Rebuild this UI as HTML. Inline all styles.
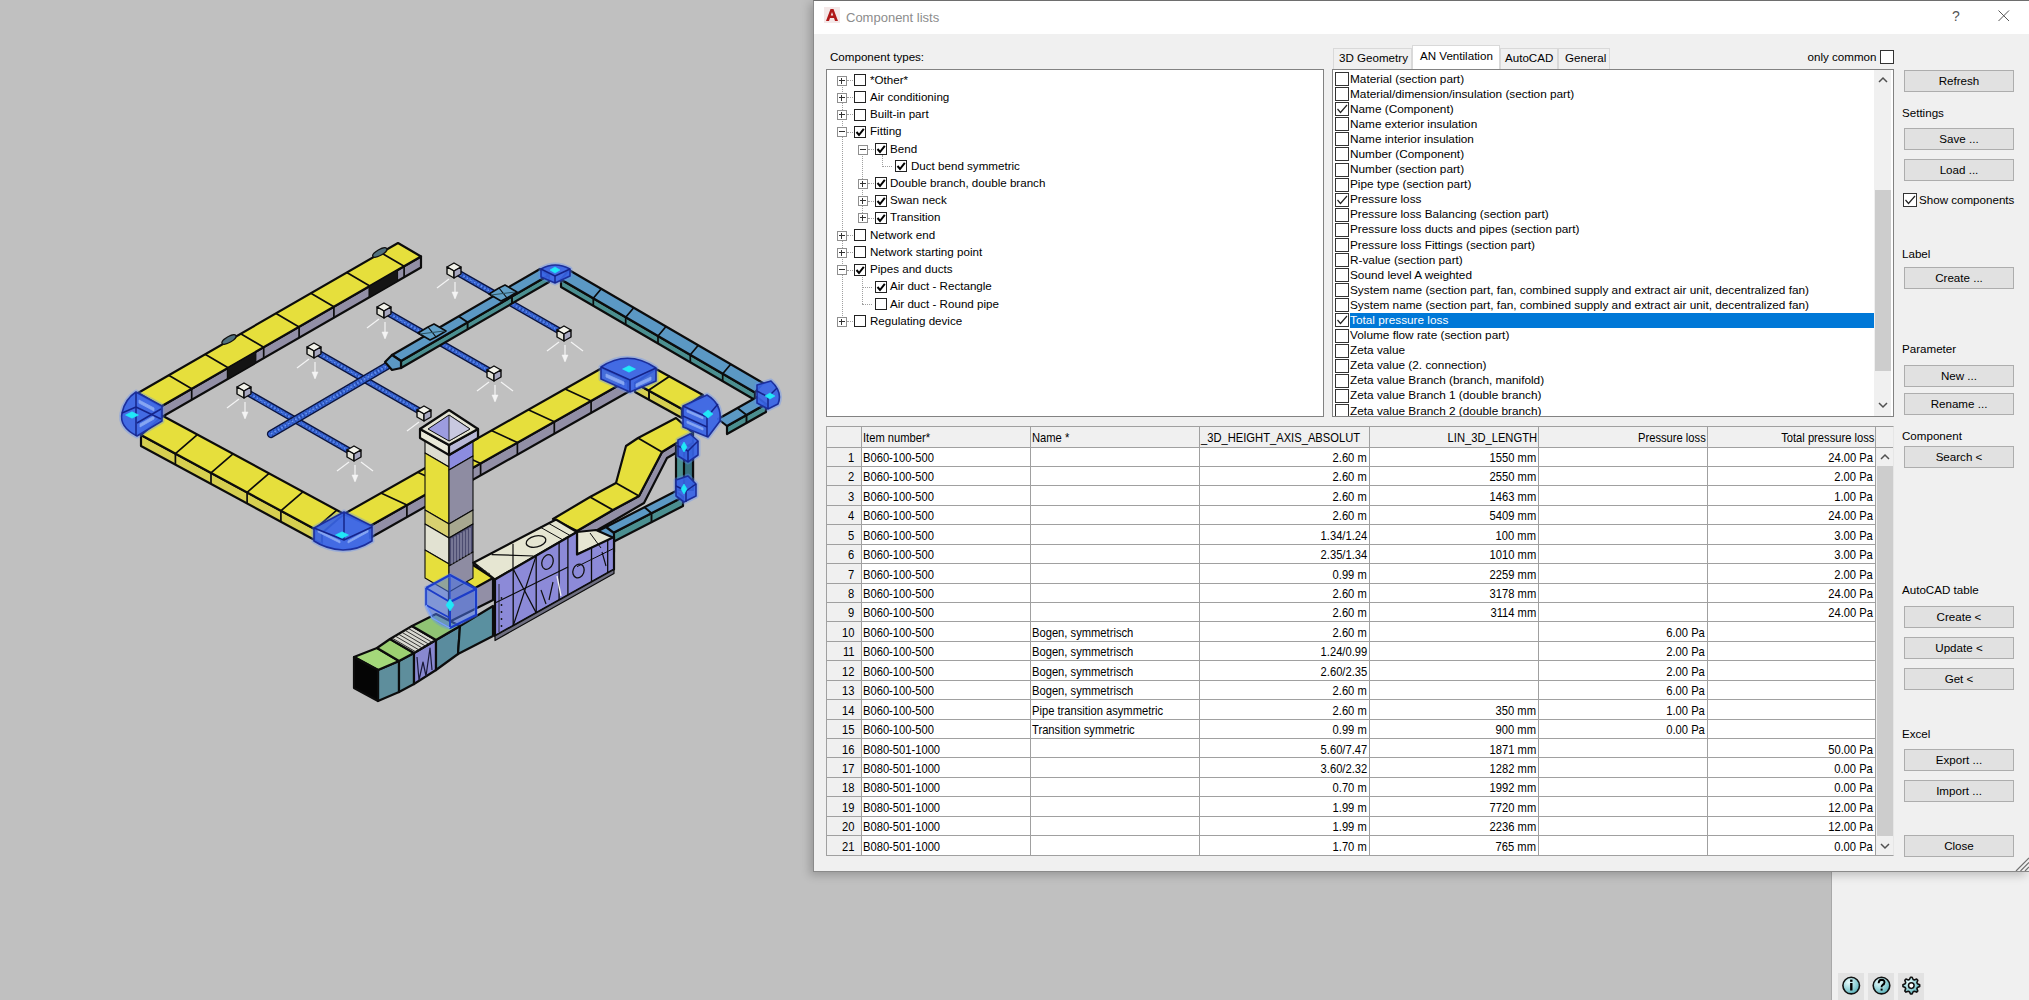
<!DOCTYPE html><html><head><meta charset="utf-8"><style>
*{margin:0;padding:0;box-sizing:border-box}
html,body{width:2029px;height:1000px;overflow:hidden;background:#c0c0c0;font-family:"Liberation Sans",sans-serif;font-size:11.6px;color:#000}
.a{position:absolute;white-space:nowrap}
.t{position:absolute;white-space:nowrap;line-height:14px}
.btn{position:absolute;left:1904px;width:110px;height:22px;background:#e1e1e1;border:1px solid #adadad;text-align:center;line-height:20px}
.cb{position:absolute;width:13px;height:13px;border:1px solid #333;background:#fff}
.exp{position:absolute;width:10px;height:10px;border:1px solid #8f8f8f;background:#fff}
.exp:before{content:"";position:absolute;left:1px;top:3px;width:6px;height:2px;border-top:1px solid #333}
.exp.p:after{content:"";position:absolute;left:3px;top:1px;width:1px;height:6px;background:#333}
.dv{position:absolute;border-left:1px dotted #a0a0a0}
.dh{position:absolute;border-top:1px dotted #a0a0a0}
.cell{position:absolute;white-space:nowrap;line-height:19px;height:19px;font-size:13px}
.cell span{display:inline-block;transform:scaleX(.86);transform-origin:0 50%}
.cell.r span{transform-origin:100% 50%}
</style></head><body>
<svg class="a" style="left:0;top:0" width="812" height="1000" viewBox="0 0 812 1000">
<polyline points="239.0,399.0 227.0,408.0" fill="none" stroke="#f4f4f4" stroke-width="1.2" stroke-linejoin="round" />
<polyline points="245.0,402.0 245.0,418.0" fill="none" stroke="#f4f4f4" stroke-width="1.2" stroke-linejoin="round" />
<polygon points="242.0,412.0 248.0,412.0 245.0,419.0" fill="#f4f4f4" stroke="#f4f4f4" stroke-width="0.5" stroke-linejoin="round" />
<polyline points="349.0,462.0 337.0,471.0" fill="none" stroke="#f4f4f4" stroke-width="1.2" stroke-linejoin="round" />
<polyline points="361.0,462.0 373.0,471.0" fill="none" stroke="#f4f4f4" stroke-width="1.2" stroke-linejoin="round" />
<polyline points="355.0,465.0 355.0,481.0" fill="none" stroke="#f4f4f4" stroke-width="1.2" stroke-linejoin="round" />
<polygon points="352.0,475.0 358.0,475.0 355.0,482.0" fill="#f4f4f4" stroke="#f4f4f4" stroke-width="0.5" stroke-linejoin="round" />
<polyline points="309.0,359.0 297.0,368.0" fill="none" stroke="#f4f4f4" stroke-width="1.2" stroke-linejoin="round" />
<polyline points="315.0,362.0 315.0,378.0" fill="none" stroke="#f4f4f4" stroke-width="1.2" stroke-linejoin="round" />
<polygon points="312.0,372.0 318.0,372.0 315.0,379.0" fill="#f4f4f4" stroke="#f4f4f4" stroke-width="0.5" stroke-linejoin="round" />
<polyline points="419.0,422.0 407.0,431.0" fill="none" stroke="#f4f4f4" stroke-width="1.2" stroke-linejoin="round" />
<polyline points="431.0,422.0 443.0,431.0" fill="none" stroke="#f4f4f4" stroke-width="1.2" stroke-linejoin="round" />
<polyline points="425.0,425.0 425.0,441.0" fill="none" stroke="#f4f4f4" stroke-width="1.2" stroke-linejoin="round" />
<polygon points="422.0,435.0 428.0,435.0 425.0,442.0" fill="#f4f4f4" stroke="#f4f4f4" stroke-width="0.5" stroke-linejoin="round" />
<polyline points="379.0,319.0 367.0,328.0" fill="none" stroke="#f4f4f4" stroke-width="1.2" stroke-linejoin="round" />
<polyline points="385.0,322.0 385.0,338.0" fill="none" stroke="#f4f4f4" stroke-width="1.2" stroke-linejoin="round" />
<polygon points="382.0,332.0 388.0,332.0 385.0,339.0" fill="#f4f4f4" stroke="#f4f4f4" stroke-width="0.5" stroke-linejoin="round" />
<polyline points="489.0,382.0 477.0,391.0" fill="none" stroke="#f4f4f4" stroke-width="1.2" stroke-linejoin="round" />
<polyline points="501.0,382.0 513.0,391.0" fill="none" stroke="#f4f4f4" stroke-width="1.2" stroke-linejoin="round" />
<polyline points="495.0,385.0 495.0,401.0" fill="none" stroke="#f4f4f4" stroke-width="1.2" stroke-linejoin="round" />
<polygon points="492.0,395.0 498.0,395.0 495.0,402.0" fill="#f4f4f4" stroke="#f4f4f4" stroke-width="0.5" stroke-linejoin="round" />
<polyline points="449.0,279.0 437.0,288.0" fill="none" stroke="#f4f4f4" stroke-width="1.2" stroke-linejoin="round" />
<polyline points="455.0,282.0 455.0,298.0" fill="none" stroke="#f4f4f4" stroke-width="1.2" stroke-linejoin="round" />
<polygon points="452.0,292.0 458.0,292.0 455.0,299.0" fill="#f4f4f4" stroke="#f4f4f4" stroke-width="0.5" stroke-linejoin="round" />
<polyline points="559.0,342.0 547.0,351.0" fill="none" stroke="#f4f4f4" stroke-width="1.2" stroke-linejoin="round" />
<polyline points="571.0,342.0 583.0,351.0" fill="none" stroke="#f4f4f4" stroke-width="1.2" stroke-linejoin="round" />
<polyline points="565.0,345.0 565.0,361.0" fill="none" stroke="#f4f4f4" stroke-width="1.2" stroke-linejoin="round" />
<polygon points="562.0,355.0 568.0,355.0 565.0,362.0" fill="#f4f4f4" stroke="#f4f4f4" stroke-width="0.5" stroke-linejoin="round" />
<polygon points="161.0,406.5 421.0,256.5 421.0,267.5 161.0,417.5" fill="#928fa6" stroke="#0c0c0c" stroke-width="2.2" stroke-linejoin="round" />
<polygon points="138.0,393.0 398.0,243.0 421.0,256.5 161.0,406.5" fill="#e6df3c" stroke="#0c0c0c" stroke-width="2.2" stroke-linejoin="round" />
<polyline points="168.7,375.3 191.7,388.8 191.7,399.8" fill="none" stroke="#0c0c0c" stroke-width="1.7" stroke-linejoin="round" />
<polyline points="205.1,354.3 228.1,367.8 228.1,378.8" fill="none" stroke="#0c0c0c" stroke-width="1.7" stroke-linejoin="round" />
<polyline points="240.7,333.8 263.7,347.2 263.7,358.2" fill="none" stroke="#0c0c0c" stroke-width="1.7" stroke-linejoin="round" />
<polyline points="276.1,313.4 299.1,326.9 299.1,337.9" fill="none" stroke="#0c0c0c" stroke-width="1.7" stroke-linejoin="round" />
<polyline points="310.9,293.2 333.9,306.8 333.9,317.8" fill="none" stroke="#0c0c0c" stroke-width="1.7" stroke-linejoin="round" />
<polyline points="346.8,272.6 369.8,286.1 369.8,297.1" fill="none" stroke="#0c0c0c" stroke-width="1.7" stroke-linejoin="round" />
<polyline points="381.1,252.8 404.1,266.2 404.1,277.2" fill="none" stroke="#0c0c0c" stroke-width="1.7" stroke-linejoin="round" />
<polygon points="227.3,368.2 255.9,351.8 255.9,362.8 227.3,379.2" fill="#141414" stroke="#0c0c0c" stroke-width="1" stroke-linejoin="round" />
<polygon points="369.0,286.5 397.6,270.0 397.6,281.0 369.0,297.5" fill="#141414" stroke="#0c0c0c" stroke-width="1" stroke-linejoin="round" />
<ellipse cx="229.0" cy="339.5" rx="8" ry="3" transform="rotate(-30 229.0 339.5)" fill="#50707e" stroke="#111" stroke-width="1.2"/>
<ellipse cx="379.8" cy="252.5" rx="8" ry="3" transform="rotate(-30 379.8 252.5)" fill="#50707e" stroke="#111" stroke-width="1.2"/>
<polygon points="141.0,435.0 322.0,533.0 322.0,544.0 141.0,446.0" fill="#d6cf50" stroke="#0c0c0c" stroke-width="2.2" stroke-linejoin="round" />
<polygon points="163.0,416.0 344.0,514.0 322.0,533.0 141.0,435.0" fill="#e6df3c" stroke="#0c0c0c" stroke-width="2.2" stroke-linejoin="round" />
<polyline points="197.4,434.6 175.4,453.6 175.4,464.6" fill="none" stroke="#0c0c0c" stroke-width="1.7" stroke-linejoin="round" />
<polyline points="233.0,453.9 211.0,472.9 211.0,483.9" fill="none" stroke="#0c0c0c" stroke-width="1.7" stroke-linejoin="round" />
<polyline points="269.1,473.4 247.1,492.4 247.1,503.4" fill="none" stroke="#0c0c0c" stroke-width="1.7" stroke-linejoin="round" />
<polyline points="302.9,491.8 280.9,510.8 280.9,521.8" fill="none" stroke="#0c0c0c" stroke-width="1.7" stroke-linejoin="round" />
<polyline points="336.8,510.1 314.8,529.1 314.8,540.1" fill="none" stroke="#0c0c0c" stroke-width="1.7" stroke-linejoin="round" />
<polyline points="243.0,390.0 353.0,453.0" fill="none" stroke="#0a1440" stroke-width="7.0" stroke-linejoin="round" stroke-linecap="round"/>
<polyline points="243.0,390.0 353.0,453.0" fill="none" stroke="#3a68d8" stroke-width="4.2" stroke-linejoin="round" stroke-linecap="round"/>
<polyline points="243.0,390.0 353.0,453.0" fill="none" stroke="#264aa8" stroke-width="4.2" stroke-linejoin="round" stroke-dasharray="1.2 2.2"/>
<polyline points="243.0,390.0 353.0,453.0" fill="none" stroke="#6a96f0" stroke-width="1.26" stroke-linejoin="round" stroke-dasharray="1.5 2.5"/>
<polyline points="313.0,350.0 423.0,413.0" fill="none" stroke="#0a1440" stroke-width="7.0" stroke-linejoin="round" stroke-linecap="round"/>
<polyline points="313.0,350.0 423.0,413.0" fill="none" stroke="#3a68d8" stroke-width="4.2" stroke-linejoin="round" stroke-linecap="round"/>
<polyline points="313.0,350.0 423.0,413.0" fill="none" stroke="#264aa8" stroke-width="4.2" stroke-linejoin="round" stroke-dasharray="1.2 2.2"/>
<polyline points="313.0,350.0 423.0,413.0" fill="none" stroke="#6a96f0" stroke-width="1.26" stroke-linejoin="round" stroke-dasharray="1.5 2.5"/>
<polyline points="383.0,310.0 493.0,373.0" fill="none" stroke="#0a1440" stroke-width="7.0" stroke-linejoin="round" stroke-linecap="round"/>
<polyline points="383.0,310.0 493.0,373.0" fill="none" stroke="#3a68d8" stroke-width="4.2" stroke-linejoin="round" stroke-linecap="round"/>
<polyline points="383.0,310.0 493.0,373.0" fill="none" stroke="#264aa8" stroke-width="4.2" stroke-linejoin="round" stroke-dasharray="1.2 2.2"/>
<polyline points="383.0,310.0 493.0,373.0" fill="none" stroke="#6a96f0" stroke-width="1.26" stroke-linejoin="round" stroke-dasharray="1.5 2.5"/>
<polyline points="453.0,270.0 563.0,333.0" fill="none" stroke="#0a1440" stroke-width="7.0" stroke-linejoin="round" stroke-linecap="round"/>
<polyline points="453.0,270.0 563.0,333.0" fill="none" stroke="#3a68d8" stroke-width="4.2" stroke-linejoin="round" stroke-linecap="round"/>
<polyline points="453.0,270.0 563.0,333.0" fill="none" stroke="#264aa8" stroke-width="4.2" stroke-linejoin="round" stroke-dasharray="1.2 2.2"/>
<polyline points="453.0,270.0 563.0,333.0" fill="none" stroke="#6a96f0" stroke-width="1.26" stroke-linejoin="round" stroke-dasharray="1.5 2.5"/>
<polyline points="271.0,434.0 392.0,363.0" fill="none" stroke="#0a1440" stroke-width="8.3" stroke-linejoin="round" stroke-linecap="round"/>
<polyline points="271.0,434.0 392.0,363.0" fill="none" stroke="#3a68d8" stroke-width="5.5" stroke-linejoin="round" stroke-linecap="round"/>
<polyline points="271.0,434.0 392.0,363.0" fill="none" stroke="#264aa8" stroke-width="5.5" stroke-linejoin="round" stroke-dasharray="1.2 2.2"/>
<polyline points="271.0,434.0 392.0,363.0" fill="none" stroke="#6a96f0" stroke-width="1.65" stroke-linejoin="round" stroke-dasharray="1.5 2.5"/>
<polygon points="401.0,361.0 549.0,275.0 549.0,282.0 401.0,368.0" fill="#4b8f90" stroke="#0c0c0c" stroke-width="2.2" stroke-linejoin="round" />
<polygon points="540.0,269.0 392.0,355.0 401.0,361.0 549.0,275.0" fill="#5b98c4" stroke="#0c0c0c" stroke-width="2.2" stroke-linejoin="round" />
<polyline points="503.0,290.5 512.0,296.5 512.0,303.5" fill="none" stroke="#0c0c0c" stroke-width="1.9" stroke-linejoin="round" />
<polyline points="458.6,316.3 467.6,322.3 467.6,329.3" fill="none" stroke="#0c0c0c" stroke-width="1.9" stroke-linejoin="round" />
<polygon points="392.0,355.0 385.0,362.0 392.0,370.0 401.0,368.0 401.0,361.0" fill="#5b98c4" stroke="#0c0c0c" stroke-width="2.2" stroke-linejoin="round" />
<polygon points="418.0,333.0 428.0,327.0 434.0,324.0 446.0,331.0 436.0,337.0 430.0,340.0" fill="#62a0c8" stroke="#0c0c0c" stroke-width="1.6" stroke-linejoin="round" />
<polyline points="428.0,327.0 436.0,337.0" fill="none" stroke="#0c0c0c" stroke-width="1.2" stroke-linejoin="round" />
<polyline points="420.0,334.0 444.0,331.0" fill="none" stroke="#2a5060" stroke-width="1.0" stroke-linejoin="round" />
<polygon points="489.0,294.0 499.0,288.0 505.0,285.0 517.0,292.0 507.0,298.0 501.0,301.0" fill="#62a0c8" stroke="#0c0c0c" stroke-width="1.6" stroke-linejoin="round" />
<polyline points="499.0,288.0 507.0,298.0" fill="none" stroke="#0c0c0c" stroke-width="1.2" stroke-linejoin="round" />
<polyline points="491.0,295.0 515.0,292.0" fill="none" stroke="#2a5060" stroke-width="1.0" stroke-linejoin="round" />
<polygon points="237.0,387.0 244.0,383.0 251.0,387.0 244.0,391.0" fill="#f2f2ea" stroke="#0c0c0c" stroke-width="1.4" stroke-linejoin="round" />
<polygon points="237.0,387.0 244.0,391.0 244.0,398.0 237.0,394.0" fill="#e2e2d8" stroke="#0c0c0c" stroke-width="1.4" stroke-linejoin="round" />
<polygon points="244.0,391.0 251.0,387.0 251.0,394.0 244.0,398.0" fill="#a8a8c0" stroke="#0c0c0c" stroke-width="1.4" stroke-linejoin="round" />
<polygon points="347.0,450.0 354.0,446.0 361.0,450.0 354.0,454.0" fill="#f2f2ea" stroke="#0c0c0c" stroke-width="1.4" stroke-linejoin="round" />
<polygon points="347.0,450.0 354.0,454.0 354.0,461.0 347.0,457.0" fill="#e2e2d8" stroke="#0c0c0c" stroke-width="1.4" stroke-linejoin="round" />
<polygon points="354.0,454.0 361.0,450.0 361.0,457.0 354.0,461.0" fill="#a8a8c0" stroke="#0c0c0c" stroke-width="1.4" stroke-linejoin="round" />
<polygon points="307.0,347.0 314.0,343.0 321.0,347.0 314.0,351.0" fill="#f2f2ea" stroke="#0c0c0c" stroke-width="1.4" stroke-linejoin="round" />
<polygon points="307.0,347.0 314.0,351.0 314.0,358.0 307.0,354.0" fill="#e2e2d8" stroke="#0c0c0c" stroke-width="1.4" stroke-linejoin="round" />
<polygon points="314.0,351.0 321.0,347.0 321.0,354.0 314.0,358.0" fill="#a8a8c0" stroke="#0c0c0c" stroke-width="1.4" stroke-linejoin="round" />
<polygon points="417.0,410.0 424.0,406.0 431.0,410.0 424.0,414.0" fill="#f2f2ea" stroke="#0c0c0c" stroke-width="1.4" stroke-linejoin="round" />
<polygon points="417.0,410.0 424.0,414.0 424.0,421.0 417.0,417.0" fill="#e2e2d8" stroke="#0c0c0c" stroke-width="1.4" stroke-linejoin="round" />
<polygon points="424.0,414.0 431.0,410.0 431.0,417.0 424.0,421.0" fill="#a8a8c0" stroke="#0c0c0c" stroke-width="1.4" stroke-linejoin="round" />
<polygon points="377.0,307.0 384.0,303.0 391.0,307.0 384.0,311.0" fill="#f2f2ea" stroke="#0c0c0c" stroke-width="1.4" stroke-linejoin="round" />
<polygon points="377.0,307.0 384.0,311.0 384.0,318.0 377.0,314.0" fill="#e2e2d8" stroke="#0c0c0c" stroke-width="1.4" stroke-linejoin="round" />
<polygon points="384.0,311.0 391.0,307.0 391.0,314.0 384.0,318.0" fill="#a8a8c0" stroke="#0c0c0c" stroke-width="1.4" stroke-linejoin="round" />
<polygon points="487.0,370.0 494.0,366.0 501.0,370.0 494.0,374.0" fill="#f2f2ea" stroke="#0c0c0c" stroke-width="1.4" stroke-linejoin="round" />
<polygon points="487.0,370.0 494.0,374.0 494.0,381.0 487.0,377.0" fill="#e2e2d8" stroke="#0c0c0c" stroke-width="1.4" stroke-linejoin="round" />
<polygon points="494.0,374.0 501.0,370.0 501.0,377.0 494.0,381.0" fill="#a8a8c0" stroke="#0c0c0c" stroke-width="1.4" stroke-linejoin="round" />
<polygon points="447.0,267.0 454.0,263.0 461.0,267.0 454.0,271.0" fill="#f2f2ea" stroke="#0c0c0c" stroke-width="1.4" stroke-linejoin="round" />
<polygon points="447.0,267.0 454.0,271.0 454.0,278.0 447.0,274.0" fill="#e2e2d8" stroke="#0c0c0c" stroke-width="1.4" stroke-linejoin="round" />
<polygon points="454.0,271.0 461.0,267.0 461.0,274.0 454.0,278.0" fill="#a8a8c0" stroke="#0c0c0c" stroke-width="1.4" stroke-linejoin="round" />
<polygon points="557.0,330.0 564.0,326.0 571.0,330.0 564.0,334.0" fill="#f2f2ea" stroke="#0c0c0c" stroke-width="1.4" stroke-linejoin="round" />
<polygon points="557.0,330.0 564.0,334.0 564.0,341.0 557.0,337.0" fill="#e2e2d8" stroke="#0c0c0c" stroke-width="1.4" stroke-linejoin="round" />
<polygon points="564.0,334.0 571.0,330.0 571.0,337.0 564.0,341.0" fill="#a8a8c0" stroke="#0c0c0c" stroke-width="1.4" stroke-linejoin="round" />
<polygon points="561.0,279.5 755.0,392.5 755.0,400.0 561.0,287.0" fill="#4b8f90" stroke="#0c0c0c" stroke-width="2.2" stroke-linejoin="round" />
<polygon points="569.0,270.0 763.0,383.0 755.0,392.5 561.0,279.5" fill="#5b98c4" stroke="#0c0c0c" stroke-width="2.2" stroke-linejoin="round" />
<polyline points="601.3,288.8 593.3,298.3 593.3,305.8" fill="none" stroke="#0c0c0c" stroke-width="1.7" stroke-linejoin="round" />
<polyline points="633.7,307.7 625.7,317.2 625.7,324.7" fill="none" stroke="#0c0c0c" stroke-width="1.7" stroke-linejoin="round" />
<polyline points="666.0,326.5 658.0,336.0 658.0,343.5" fill="none" stroke="#0c0c0c" stroke-width="1.7" stroke-linejoin="round" />
<polyline points="698.3,345.3 690.3,354.8 690.3,362.3" fill="none" stroke="#0c0c0c" stroke-width="1.7" stroke-linejoin="round" />
<polyline points="730.7,364.2 722.7,373.7 722.7,381.2" fill="none" stroke="#0c0c0c" stroke-width="1.7" stroke-linejoin="round" />
<polygon points="727.0,426.0 766.0,404.0 766.0,412.0 727.0,434.0" fill="#4b8f90" stroke="#0c0c0c" stroke-width="2.2" stroke-linejoin="round" />
<polygon points="757.0,397.0 718.0,419.0 727.0,426.0 766.0,404.0" fill="#5b98c4" stroke="#0c0c0c" stroke-width="2.2" stroke-linejoin="round" />
<polyline points="737.5,408.0 746.5,415.0 746.5,423.0" fill="none" stroke="#0c0c0c" stroke-width="1.9" stroke-linejoin="round" />
<polygon points="370.0,526.0 628.0,380.0 628.0,392.0 370.0,538.0" fill="#928fa6" stroke="#0c0c0c" stroke-width="2.2" stroke-linejoin="round" />
<polygon points="344.0,514.0 602.0,368.0 628.0,380.0 370.0,526.0" fill="#e6df3c" stroke="#0c0c0c" stroke-width="2.2" stroke-linejoin="round" />
<polyline points="380.9,493.1 406.9,505.1 406.9,517.1" fill="none" stroke="#0c0c0c" stroke-width="1.7" stroke-linejoin="round" />
<polyline points="417.7,472.3 443.7,484.3 443.7,496.3" fill="none" stroke="#0c0c0c" stroke-width="1.7" stroke-linejoin="round" />
<polyline points="454.6,451.4 480.6,463.4 480.6,475.4" fill="none" stroke="#0c0c0c" stroke-width="1.7" stroke-linejoin="round" />
<polyline points="491.4,430.6 517.4,442.6 517.4,454.6" fill="none" stroke="#0c0c0c" stroke-width="1.7" stroke-linejoin="round" />
<polyline points="528.3,409.7 554.3,421.7 554.3,433.7" fill="none" stroke="#0c0c0c" stroke-width="1.7" stroke-linejoin="round" />
<polyline points="565.1,388.9 591.1,400.9 591.1,412.9" fill="none" stroke="#0c0c0c" stroke-width="1.7" stroke-linejoin="round" />
<polygon points="635.0,383.0 682.0,409.0 682.0,418.0 635.0,392.0" fill="#d6cf50" stroke="#0c0c0c" stroke-width="2.2" stroke-linejoin="round" />
<polygon points="656.0,369.0 703.0,395.0 682.0,409.0 635.0,383.0" fill="#e6df3c" stroke="#0c0c0c" stroke-width="2.2" stroke-linejoin="round" />
<polyline points="670.0,376.0 649.0,390.0 649.0,399.0" fill="none" stroke="#0c0c0c" stroke-width="1.9" stroke-linejoin="round" />
<polygon points="693.0,433.0 693.0,443.0 667.0,458.0 644.0,503.0 615.0,520.0 578.0,541.0 577.0,531.0 613.0,510.0 639.0,496.0 662.0,452.0" fill="#928fa6" stroke="#0c0c0c" stroke-width="2.2" stroke-linejoin="round" />
<polygon points="676.0,418.0 638.0,438.0 626.0,446.0 616.0,483.0 590.0,497.0 553.0,519.0 577.0,531.0 613.0,510.0 639.0,496.0 662.0,452.0 693.0,433.0" fill="#e6df3c" stroke="#0c0c0c" stroke-width="2.2" stroke-linejoin="round" />
<polyline points="638.0,438.0 662.0,452.0" fill="none" stroke="#0c0c0c" stroke-width="1.9" stroke-linejoin="round" />
<polyline points="616.0,483.0 639.0,496.0" fill="none" stroke="#0c0c0c" stroke-width="1.9" stroke-linejoin="round" />
<polyline points="590.0,497.0 613.0,510.0" fill="none" stroke="#0c0c0c" stroke-width="1.9" stroke-linejoin="round" />
<polygon points="676.0,446.0 693.0,446.0 693.0,490.0 676.0,490.0" fill="#4b8f90" stroke="#0c0c0c" stroke-width="2.2" stroke-linejoin="round" />
<polygon points="684.0,446.0 693.0,446.0 693.0,490.0 684.0,490.0" fill="#36707e" stroke="#0c0c0c" stroke-width="2.2" stroke-linejoin="round" />
<polygon points="613.0,533.0 683.0,497.0 683.0,506.0 613.0,542.0" fill="#4b8f90" stroke="#0c0c0c" stroke-width="2.2" stroke-linejoin="round" />
<polygon points="676.0,491.0 606.0,527.0 613.0,533.0 683.0,497.0" fill="#5b98c4" stroke="#0c0c0c" stroke-width="2.2" stroke-linejoin="round" />
<polyline points="644.5,507.2 651.5,513.2 651.5,522.2" fill="none" stroke="#0c0c0c" stroke-width="1.9" stroke-linejoin="round" />
<polygon points="606.0,527.0 596.0,532.0 602.0,548.0 614.0,552.0 614.0,533.0" fill="#5b98c4" stroke="#0c0c0c" stroke-width="2.2" stroke-linejoin="round" />
<polygon points="449.0,585.0 493.0,562.0 493.0,600.0 449.0,622.0" fill="#928fa6" stroke="#0c0c0c" stroke-width="2.2" stroke-linejoin="round" />
<polygon points="455.0,575.0 473.0,565.0 493.0,578.0 475.0,588.0" fill="#e6df3c" stroke="#0c0c0c" stroke-width="2.2" stroke-linejoin="round" />
<polygon points="425.0,440.0 449.0,454.0 449.0,467.0 425.0,453.0" fill="#dcdcd0" stroke="#0c0c0c" stroke-width="1.1" stroke-linejoin="round" />
<polygon points="425.0,453.0 449.0,467.0 449.0,524.0 425.0,510.0" fill="#e6df3c" stroke="#0c0c0c" stroke-width="1.1" stroke-linejoin="round" />
<polygon points="425.0,510.0 449.0,524.0 449.0,538.0 425.0,524.0" fill="#d8d070" stroke="#0c0c0c" stroke-width="1.1" stroke-linejoin="round" />
<polygon points="425.0,524.0 449.0,538.0 449.0,564.0 425.0,550.0" fill="#e2e2d2" stroke="#0c0c0c" stroke-width="1.1" stroke-linejoin="round" />
<polygon points="425.0,550.0 449.0,564.0 449.0,592.0 425.0,578.0" fill="#e6df3c" stroke="#0c0c0c" stroke-width="1.1" stroke-linejoin="round" />
<polygon points="449.0,454.0 473.0,440.0 473.0,456.0 449.0,470.0" fill="#8c8ce0" stroke="#0c0c0c" stroke-width="1.1" stroke-linejoin="round" />
<polygon points="449.0,470.0 473.0,456.0 473.0,510.0 449.0,524.0" fill="#8e8ca2" stroke="#0c0c0c" stroke-width="1.1" stroke-linejoin="round" />
<polygon points="449.0,524.0 473.0,510.0 473.0,524.0 449.0,538.0" fill="#a8a890" stroke="#0c0c0c" stroke-width="1.1" stroke-linejoin="round" />
<polygon points="449.0,538.0 473.0,524.0 473.0,552.0 449.0,566.0" fill="#4c4c70" stroke="#0c0c0c" stroke-width="1.1" stroke-linejoin="round" />
<polygon points="449.0,566.0 473.0,552.0 473.0,578.0 449.0,592.0" fill="#8e8ca2" stroke="#0c0c0c" stroke-width="1.1" stroke-linejoin="round" />
<polyline points="452.0,538.3 452.0,564.3" fill="none" stroke="#dcdcec" stroke-width="0.6" stroke-linejoin="round" />
<polyline points="455.0,536.5 455.0,562.5" fill="none" stroke="#dcdcec" stroke-width="0.6" stroke-linejoin="round" />
<polyline points="458.0,534.8 458.0,560.8" fill="none" stroke="#dcdcec" stroke-width="0.6" stroke-linejoin="round" />
<polyline points="461.0,533.0 461.0,559.0" fill="none" stroke="#dcdcec" stroke-width="0.6" stroke-linejoin="round" />
<polyline points="464.0,531.3 464.0,557.3" fill="none" stroke="#dcdcec" stroke-width="0.6" stroke-linejoin="round" />
<polyline points="467.0,529.6 467.0,555.6" fill="none" stroke="#dcdcec" stroke-width="0.6" stroke-linejoin="round" />
<polyline points="470.0,527.8 470.0,553.8" fill="none" stroke="#dcdcec" stroke-width="0.6" stroke-linejoin="round" />
<polygon points="420.0,429.0 420.0,438.0 449.0,455.0 478.0,438.0 478.0,429.0 449.0,445.0" fill="#e8e8d8" stroke="#0c0c0c" stroke-width="2.2" stroke-linejoin="round" />
<polygon points="478.0,429.0 478.0,438.0 449.0,455.0 449.0,445.0" fill="#b8b8d8" stroke="#0c0c0c" stroke-width="2.2" stroke-linejoin="round" />
<polygon points="420.0,429.0 449.0,410.0 478.0,429.0 449.0,445.0" fill="#e4e4d4" stroke="#0c0c0c" stroke-width="2.2" stroke-linejoin="round" />
<polygon points="428.0,429.0 449.0,415.0 470.0,429.0 449.0,441.0" fill="#9c9ce0" stroke="#0c0c0c" stroke-width="1" stroke-linejoin="round" />
<polygon points="449.0,415.0 470.0,429.0 449.0,441.0" fill="#c8c8e0" stroke="#0c0c0c" stroke-width="0.8" stroke-linejoin="round" />
<polygon points="473.4,562.7 556.0,519.5 577.0,532.0 495.0,579.5" fill="#e6e6d2" stroke="#0c0c0c" stroke-width="2.2" stroke-linejoin="round" />
<polygon points="577.0,532.0 596.0,530.0 614.0,538.0 577.0,554.6" fill="#e6e6d2" stroke="#0c0c0c" stroke-width="2.2" stroke-linejoin="round" />
<polygon points="495.0,579.5 577.0,532.0 577.0,554.6 614.0,537.0 614.0,569.4 495.0,636.0" fill="#8c8ad8" stroke="#0c0c0c" stroke-width="2.2" stroke-linejoin="round" />
<polygon points="495.0,636.0 614.0,569.4 614.0,573.5 495.0,640.5" fill="#6e6e80" stroke="#0c0c0c" stroke-width="1.2" stroke-linejoin="round" />
<polyline points="513.2,569.0 513.2,625.8" fill="none" stroke="#0c0c0c" stroke-width="1.3" stroke-linejoin="round" />
<polyline points="536.2,555.6 536.2,612.9" fill="none" stroke="#0c0c0c" stroke-width="1.3" stroke-linejoin="round" />
<polyline points="559.1,542.4 559.1,600.1" fill="none" stroke="#0c0c0c" stroke-width="1.3" stroke-linejoin="round" />
<polyline points="567.9,537.3 567.9,595.1" fill="none" stroke="#0c0c0c" stroke-width="1.3" stroke-linejoin="round" />
<polyline points="591.5,547.7 591.5,581.9" fill="none" stroke="#0c0c0c" stroke-width="1.3" stroke-linejoin="round" />
<polyline points="607.7,540.0 607.7,572.8" fill="none" stroke="#0c0c0c" stroke-width="1.3" stroke-linejoin="round" />
<polyline points="495.0,603.0 568.0,567.0" fill="none" stroke="#0c0c0c" stroke-width="1.2" stroke-linejoin="round" />
<polyline points="577.0,566.6 614.0,548.3" fill="none" stroke="#0c0c0c" stroke-width="1.0" stroke-linejoin="round" />
<polyline points="513.2,569.0 536.2,612.9" fill="none" stroke="#0c0c0c" stroke-width="1.2" stroke-linejoin="round" />
<polyline points="536.2,555.6 513.2,625.8" fill="none" stroke="#0c0c0c" stroke-width="1.2" stroke-linejoin="round" />
<ellipse cx="547.5" cy="562" rx="5.5" ry="7.5" transform="rotate(20 547.5 562)" fill="none" stroke="#111" stroke-width="1.3"/>
<ellipse cx="578.5" cy="571" rx="5.5" ry="7" transform="rotate(20 578.5 571)" fill="none" stroke="#111" stroke-width="1.3"/>
<ellipse cx="536" cy="541.5" rx="10" ry="5.5" transform="rotate(-12 536 541.5)" fill="none" stroke="#111" stroke-width="1.3"/>
<polyline points="541.0,590.0 546.0,604.0" fill="none" stroke="#111" stroke-width="1.2" stroke-linejoin="round" />
<polyline points="553.0,582.0 549.0,600.0" fill="none" stroke="#111" stroke-width="1.2" stroke-linejoin="round" />
<polyline points="557.0,576.0 561.0,596.0" fill="none" stroke="#f4f4f4" stroke-width="1.3" stroke-linejoin="round" />
<polyline points="602.0,552.0 606.0,566.0" fill="none" stroke="#0c0c0c" stroke-width="1.1" stroke-linejoin="round" />
<polyline points="491.6,554.6 533.5,556.0" fill="none" stroke="#0c0c0c" stroke-width="1.2" stroke-linejoin="round" />
<polyline points="513.0,543.7 513.0,568.0" fill="none" stroke="#0c0c0c" stroke-width="1.2" stroke-linejoin="round" />
<polyline points="490.0,574.0 478.0,566.0" fill="none" stroke="#333" stroke-width="0.9" stroke-linejoin="round" stroke-dasharray="2 2"/>
<polyline points="540.0,527.0 563.0,540.0" fill="none" stroke="#0c0c0c" stroke-width="1.0" stroke-linejoin="round" />
<polyline points="548.0,523.0 571.0,536.0" fill="none" stroke="#0c0c0c" stroke-width="1.0" stroke-linejoin="round" />
<polyline points="590.0,533.0 601.0,548.0" fill="none" stroke="#0c0c0c" stroke-width="1.0" stroke-linejoin="round" />
<circle cx="501.5" cy="598.0" r="0.9" fill="#111"/>
<circle cx="501.5" cy="605.0" r="0.9" fill="#111"/>
<circle cx="501.5" cy="612.0" r="0.9" fill="#111"/>
<circle cx="501.5" cy="619.0" r="0.9" fill="#111"/>
<circle cx="501.5" cy="626.0" r="0.9" fill="#111"/>
<polyline points="499.0,584.0 499.0,632.0" fill="none" stroke="#111" stroke-width="0.8" stroke-linejoin="round" />
<polygon points="378.0,670.0 399.0,661.0 399.0,692.0 378.0,701.0" fill="#5e8e9c" stroke="#0c0c0c" stroke-width="2.2" stroke-linejoin="round" />
<polygon points="399.0,661.0 414.0,653.0 414.0,684.0 399.0,692.0" fill="#5e8e9c" stroke="#0c0c0c" stroke-width="2.2" stroke-linejoin="round" />
<polygon points="414.0,653.0 436.0,640.0 436.0,670.0 414.0,684.0" fill="#8888d0" stroke="#0c0c0c" stroke-width="2.2" stroke-linejoin="round" />
<polygon points="436.0,640.0 460.0,626.0 458.0,654.0 436.0,670.0" fill="#5a8c9e" stroke="#0c0c0c" stroke-width="2.2" stroke-linejoin="round" />
<polygon points="460.0,626.0 493.0,606.0 493.0,636.0 458.0,654.0" fill="#5a90a0" stroke="#0c0c0c" stroke-width="2.2" stroke-linejoin="round" />
<polygon points="354.0,657.0 377.0,648.0 399.0,661.0 378.0,670.0" fill="#a4d87a" stroke="#0c0c0c" stroke-width="2.2" stroke-linejoin="round" />
<polygon points="377.0,648.0 390.0,639.0 414.0,653.0 399.0,661.0" fill="#9cd072" stroke="#0c0c0c" stroke-width="2.2" stroke-linejoin="round" />
<polygon points="390.0,639.0 412.0,626.0 436.0,640.0 414.0,653.0" fill="#d8d8d0" stroke="#0c0c0c" stroke-width="2.2" stroke-linejoin="round" />
<polyline points="392.0,638.0 416.0,652.0" fill="none" stroke="#222" stroke-width="0.9" stroke-linejoin="round" />
<polyline points="395.3,636.1 419.3,650.1" fill="none" stroke="#222" stroke-width="0.9" stroke-linejoin="round" />
<polyline points="398.6,634.2 422.6,648.2" fill="none" stroke="#222" stroke-width="0.9" stroke-linejoin="round" />
<polyline points="401.9,632.3 425.9,646.3" fill="none" stroke="#222" stroke-width="0.9" stroke-linejoin="round" />
<polyline points="405.2,630.4 429.2,644.4" fill="none" stroke="#222" stroke-width="0.9" stroke-linejoin="round" />
<polyline points="408.5,628.5 432.5,642.5" fill="none" stroke="#222" stroke-width="0.9" stroke-linejoin="round" />
<polyline points="411.8,626.6 435.8,640.6" fill="none" stroke="#222" stroke-width="0.9" stroke-linejoin="round" />
<polygon points="412.0,626.0 436.0,614.0 460.0,626.0 436.0,640.0" fill="#90c474" stroke="#0c0c0c" stroke-width="2.2" stroke-linejoin="round" />
<polygon points="354.0,657.0 378.0,670.0 378.0,701.0 354.0,688.0" fill="#050505" stroke="#0c0c0c" stroke-width="2.2" stroke-linejoin="round" />
<polyline points="417.0,657.0 419.0,680.0 423.0,662.0 426.0,676.0 430.0,648.0 432.0,670.0" fill="none" stroke="#1a1a3a" stroke-width="1.2" stroke-linejoin="round" />
<path d="M136,392 L162,406 L162,421 L137,436 Q119,427 122,413 Q125,399 136,392 Z" fill="none" stroke="#5a8cff" stroke-width="5" stroke-opacity="0.35" stroke-linejoin="round"/>
<path d="M136,392 L162,406 L162,421 L137,436 Q119,427 122,413 Q125,399 136,392 Z" fill="#3864e6" fill-opacity="0.92" stroke="#1c2f9c" stroke-width="1.6" stroke-linejoin="round"/>
<polygon points="139.0,400.0 154.0,408.0 154.0,411.0 139.0,403.0" fill="#86a6f2" stroke="#86a6f2" stroke-width="0.8" stroke-linejoin="round" />
<polygon points="140.0,424.0 154.0,416.0 154.0,419.0 140.0,427.0" fill="#86a6f2" stroke="#86a6f2" stroke-width="0.8" stroke-linejoin="round" />
<polyline points="136.0,393.0 136.0,436.0" fill="none" stroke="#15248a" stroke-width="1.5" stroke-linejoin="round" />
<polyline points="136.0,407.0 161.0,419.0" fill="none" stroke="#15248a" stroke-width="1.5" stroke-linejoin="round" />
<polyline points="137.0,423.0 161.0,409.0" fill="none" stroke="#15248a" stroke-width="1.5" stroke-linejoin="round" />
<polyline points="122.0,413.0 136.0,407.0" fill="none" stroke="#15248a" stroke-width="1.5" stroke-linejoin="round" />
<polygon points="125.5,415.0 132.0,411.8 138.5,415.0 132.0,418.2" fill="#20e8f8" stroke="#20e8f8" stroke-width="0.6" stroke-linejoin="round" />
<path d="M344,512 L372,526 L372,541 Q358,550 343,550 Q326,549 314,541 L314,528 Z" fill="none" stroke="#5a8cff" stroke-width="5" stroke-opacity="0.35" stroke-linejoin="round"/>
<path d="M344,512 L372,526 L372,541 Q358,550 343,550 Q326,549 314,541 L314,528 Z" fill="#3864e6" fill-opacity="0.92" stroke="#1c2f9c" stroke-width="1.6" stroke-linejoin="round"/>
<polygon points="318.0,530.0 340.0,541.0 340.0,543.0 318.0,532.0" fill="#86a6f2" stroke="#86a6f2" stroke-width="0.8" stroke-linejoin="round" />
<polygon points="348.0,541.0 368.0,530.0 368.0,532.0 348.0,543.0" fill="#86a6f2" stroke="#86a6f2" stroke-width="0.8" stroke-linejoin="round" />
<polyline points="344.0,513.0 344.0,540.0" fill="none" stroke="#15248a" stroke-width="1.5" stroke-linejoin="round" />
<polyline points="314.0,528.0 344.0,540.0 372.0,527.0" fill="none" stroke="#15248a" stroke-width="1.5" stroke-linejoin="round" />
<polygon points="335.5,535.0 342.0,531.8 348.5,535.0 342.0,538.2" fill="#20e8f8" stroke="#20e8f8" stroke-width="0.6" stroke-linejoin="round" />
<path d="M601,367 Q628,349 656,368 L656,381 L630,392 L601,379 Z" fill="none" stroke="#5a8cff" stroke-width="5" stroke-opacity="0.35" stroke-linejoin="round"/>
<path d="M601,367 Q628,349 656,368 L656,381 L630,392 L601,379 Z" fill="#3864e6" fill-opacity="0.92" stroke="#1c2f9c" stroke-width="1.6" stroke-linejoin="round"/>
<polygon points="606.0,374.0 624.0,382.0 624.0,385.0 606.0,377.0" fill="#86a6f2" stroke="#86a6f2" stroke-width="0.8" stroke-linejoin="round" />
<polygon points="636.0,384.0 651.0,377.0 651.0,380.0 636.0,387.0" fill="#86a6f2" stroke="#86a6f2" stroke-width="0.8" stroke-linejoin="round" />
<polyline points="601.0,367.0 630.0,380.0 656.0,368.0" fill="none" stroke="#15248a" stroke-width="1.5" stroke-linejoin="round" />
<polyline points="630.0,380.0 630.0,392.0" fill="none" stroke="#15248a" stroke-width="1.5" stroke-linejoin="round" />
<polygon points="622.5,369.0 629.0,365.8 635.5,369.0 629.0,372.2" fill="#20e8f8" stroke="#20e8f8" stroke-width="0.6" stroke-linejoin="round" />
<path d="M683,406 L707,395 Q722,404 720,421 L708,437 L683,427 Z" fill="none" stroke="#5a8cff" stroke-width="5" stroke-opacity="0.35" stroke-linejoin="round"/>
<path d="M683,406 L707,395 Q722,404 720,421 L708,437 L683,427 Z" fill="#3864e6" fill-opacity="0.92" stroke="#1c2f9c" stroke-width="1.6" stroke-linejoin="round"/>
<polygon points="687.0,410.0 703.0,417.0 703.0,419.0 687.0,412.0" fill="#86a6f2" stroke="#86a6f2" stroke-width="0.8" stroke-linejoin="round" />
<polygon points="687.0,421.0 703.0,428.0 703.0,430.0 687.0,423.0" fill="#86a6f2" stroke="#86a6f2" stroke-width="0.8" stroke-linejoin="round" />
<polyline points="683.0,406.0 707.0,417.0 707.0,437.0" fill="none" stroke="#15248a" stroke-width="1.5" stroke-linejoin="round" />
<polyline points="707.0,417.0 718.0,404.0" fill="none" stroke="#15248a" stroke-width="1.5" stroke-linejoin="round" />
<polyline points="683.0,416.0 707.0,427.0" fill="none" stroke="#15248a" stroke-width="1.5" stroke-linejoin="round" />
<polygon points="703.0,414.0 708.0,410.0 713.0,414.0 708.0,418.0" fill="#20e8f8" stroke="#20e8f8" stroke-width="0.6" stroke-linejoin="round" />
<path d="M541,269 Q555,261 570,269 L570,276 L555,283 L541,277 Z" fill="none" stroke="#5a8cff" stroke-width="5" stroke-opacity="0.35" stroke-linejoin="round"/>
<path d="M541,269 Q555,261 570,269 L570,276 L555,283 L541,277 Z" fill="#3864e6" fill-opacity="0.92" stroke="#1c2f9c" stroke-width="1.6" stroke-linejoin="round"/>
<polyline points="541.0,269.0 555.0,276.0 570.0,269.0" fill="none" stroke="#15248a" stroke-width="1.5" stroke-linejoin="round" />
<polyline points="555.0,276.0 555.0,283.0" fill="none" stroke="#15248a" stroke-width="1.5" stroke-linejoin="round" />
<polygon points="550.0,270.0 555.0,267.0 560.0,270.0 555.0,273.0" fill="#20e8f8" stroke="#20e8f8" stroke-width="0.6" stroke-linejoin="round" />
<path d="M757,385 L771,381 Q783,392 778,404 L768,409 L757,403 Z" fill="none" stroke="#5a8cff" stroke-width="5" stroke-opacity="0.35" stroke-linejoin="round"/>
<path d="M757,385 L771,381 Q783,392 778,404 L768,409 L757,403 Z" fill="#3864e6" fill-opacity="0.92" stroke="#1c2f9c" stroke-width="1.6" stroke-linejoin="round"/>
<polyline points="757.0,391.0 768.0,397.0 768.0,409.0" fill="none" stroke="#15248a" stroke-width="1.5" stroke-linejoin="round" />
<polyline points="768.0,397.0 777.0,388.0" fill="none" stroke="#15248a" stroke-width="1.5" stroke-linejoin="round" />
<polygon points="765.0,396.0 770.0,393.0 775.0,396.0 770.0,399.0" fill="#20e8f8" stroke="#20e8f8" stroke-width="0.6" stroke-linejoin="round" />
<path d="M678,440 L690,434 L698,441 L698,455 L688,462 L678,456 Z" fill="none" stroke="#5a8cff" stroke-width="5" stroke-opacity="0.35" stroke-linejoin="round"/>
<path d="M678,440 L690,434 L698,441 L698,455 L688,462 L678,456 Z" fill="#3864e6" fill-opacity="0.92" stroke="#1c2f9c" stroke-width="1.6" stroke-linejoin="round"/>
<polyline points="678.0,446.0 688.0,451.0 698.0,441.0" fill="none" stroke="#15248a" stroke-width="1.5" stroke-linejoin="round" />
<polyline points="688.0,451.0 688.0,462.0" fill="none" stroke="#15248a" stroke-width="1.5" stroke-linejoin="round" />
<polygon points="681.0,447.0 684.0,442.0 687.0,447.0 684.0,452.0" fill="#20e8f8" stroke="#20e8f8" stroke-width="0.6" stroke-linejoin="round" />
<path d="M676,480 L688,476 L696,484 L696,496 L684,502 L676,496 Z" fill="none" stroke="#5a8cff" stroke-width="5" stroke-opacity="0.35" stroke-linejoin="round"/>
<path d="M676,480 L688,476 L696,484 L696,496 L684,502 L676,496 Z" fill="#3864e6" fill-opacity="0.92" stroke="#1c2f9c" stroke-width="1.6" stroke-linejoin="round"/>
<polyline points="676.0,486.0 686.0,491.0 696.0,484.0" fill="none" stroke="#15248a" stroke-width="1.5" stroke-linejoin="round" />
<polyline points="686.0,491.0 686.0,502.0" fill="none" stroke="#15248a" stroke-width="1.5" stroke-linejoin="round" />
<polygon points="681.0,489.0 684.0,484.0 687.0,489.0 684.0,494.0" fill="#20e8f8" stroke="#20e8f8" stroke-width="0.6" stroke-linejoin="round" />
<path d="M426,588 L450,575 L476,589 L476,615 L450,628 Q432,624 426,605 Z" fill="#4a72e8" fill-opacity="0.55" stroke="#5a8cff" stroke-width="4" stroke-opacity="0.35"/>
<polyline points="426.0,588.0 450.0,575.0 476.0,589.0 450.0,602.0 426.0,588.0" fill="none" stroke="#1c3cc8" stroke-width="2" stroke-linejoin="round" />
<polyline points="476.0,589.0 476.0,615.0 450.0,628.0 450.0,602.0" fill="none" stroke="#1c3cc8" stroke-width="2" stroke-linejoin="round" />
<polyline points="426.0,588.0 426.0,605.0 450.0,618.0" fill="none" stroke="#1c3cc8" stroke-width="1.6" stroke-linejoin="round" />
<polyline points="450.0,575.0 450.0,602.0" fill="none" stroke="#2c50d8" stroke-width="1.2" stroke-linejoin="round" />
<polyline points="426.0,605.0 432.0,618.0 450.0,628.0" fill="none" stroke="#7aa0ff" stroke-width="1.2" stroke-linejoin="round" />
<polygon points="446.0,605.0 450.0,599.0 454.0,605.0 450.0,611.0" fill="#20e8f8" stroke="#20e8f8" stroke-width="0.6" stroke-linejoin="round" />
</svg>
<div class="a" style="left:1831px;top:871px;width:198px;height:129px;background:#f0f0f0;border-left:1px solid #a8a8a8"></div>
<div class="a" style="left:813px;top:0;width:1216px;height:872px;background:#f0f0f0;border-left:1px solid #8a8a8a;border-top:1px solid #6e6e6e;border-bottom:1px solid #8a8a8a;box-shadow:-3px 3px 9px rgba(0,0,0,.22)"></div>
<div class="a" style="left:814px;top:1px;width:1215px;height:33px;background:#fff"></div>
<div class="a" style="left:824px;top:7px;width:16px;height:16px;background:#f4e8e8"></div>
<svg class="a" style="left:825px;top:8px" width="14" height="14" viewBox="0 0 14 14"><path d="M1 13 L5.5 1 L8.5 1 L13 13 L10 13 L9 10 L5 10 L4 13 Z M5.8 7.5 L8.2 7.5 L7 4 Z" fill="#b01818"/></svg>
<div class="t" style="left:846px;top:10.7px;font-size:13px;color:#8c8c8c">Component lists</div>
<div class="t" style="left:1952px;top:9px;font-size:14px;color:#555">?</div>
<svg class="a" style="left:1998px;top:10px" width="12" height="12"><path d="M0.5 0.5 L11 11 M11 0.5 L0.5 11" stroke="#555" stroke-width="1"/></svg>
<div class="t" style="left:830px;top:50px">Component types:</div>
<div class="a" style="left:826px;top:69px;width:498px;height:348px;background:#fff;border:1px solid #828282"></div>
<div class="dv" style="left:842px;top:85px;height:233px"></div>
<div class="dv" style="left:862px;top:153px;height:66px"></div>
<div class="dv" style="left:882px;top:155px;height:10px"></div><div class="dh" style="left:882px;top:166px;width:10px"></div>
<div class="dv" style="left:862px;top:274px;height:30px"></div><div class="dh" style="left:862px;top:287px;width:10px"></div><div class="dh" style="left:862px;top:304px;width:10px"></div>
<div class="exp p" style="left:837px;top:75.5px"></div>
<div class="dh" style="left:847px;top:80px;width:6px"></div>
<div class="cb" style="left:854px;top:74.0px;width:12px;height:12px;border:1px solid #222"></div>
<div class="t" style="left:870px;top:72.5px">*Other*</div>
<div class="exp p" style="left:837px;top:92.7px"></div>
<div class="dh" style="left:847px;top:97px;width:6px"></div>
<div class="cb" style="left:854px;top:91.2px;width:12px;height:12px;border:1px solid #222"></div>
<div class="t" style="left:870px;top:89.7px">Air conditioning</div>
<div class="exp p" style="left:837px;top:110.0px"></div>
<div class="dh" style="left:847px;top:114px;width:6px"></div>
<div class="cb" style="left:854px;top:108.5px;width:12px;height:12px;border:1px solid #222"></div>
<div class="t" style="left:870px;top:107.0px">Built-in part</div>
<div class="exp m" style="left:837px;top:127.2px"></div>
<div class="dh" style="left:847px;top:132px;width:6px"></div>
<div class="cb" style="left:854px;top:125.7px;width:12px;height:12px;border:1px solid #222"><svg width="10" height="10" style="position:absolute;left:0;top:0"><path d="M1.5 5 L4 8 L8.8 1.8" stroke="#000" stroke-width="2" fill="none"/></svg></div>
<div class="t" style="left:870px;top:124.2px">Fitting</div>
<div class="exp m" style="left:858px;top:144.5px"></div>
<div class="dh" style="left:868px;top:149px;width:6px"></div>
<div class="cb" style="left:875px;top:143.0px;width:12px;height:12px;border:1px solid #222"><svg width="10" height="10" style="position:absolute;left:0;top:0"><path d="M1.5 5 L4 8 L8.8 1.8" stroke="#000" stroke-width="2" fill="none"/></svg></div>
<div class="t" style="left:890px;top:141.5px">Bend</div>
<div class="cb" style="left:895px;top:160.2px;width:12px;height:12px;border:1px solid #222"><svg width="10" height="10" style="position:absolute;left:0;top:0"><path d="M1.5 5 L4 8 L8.8 1.8" stroke="#000" stroke-width="2" fill="none"/></svg></div>
<div class="t" style="left:911px;top:158.7px">Duct bend symmetric</div>
<div class="exp p" style="left:858px;top:178.9px"></div>
<div class="dh" style="left:868px;top:183px;width:6px"></div>
<div class="cb" style="left:875px;top:177.4px;width:12px;height:12px;border:1px solid #222"><svg width="10" height="10" style="position:absolute;left:0;top:0"><path d="M1.5 5 L4 8 L8.8 1.8" stroke="#000" stroke-width="2" fill="none"/></svg></div>
<div class="t" style="left:890px;top:175.9px">Double branch, double branch</div>
<div class="exp p" style="left:858px;top:196.2px"></div>
<div class="dh" style="left:868px;top:201px;width:6px"></div>
<div class="cb" style="left:875px;top:194.7px;width:12px;height:12px;border:1px solid #222"><svg width="10" height="10" style="position:absolute;left:0;top:0"><path d="M1.5 5 L4 8 L8.8 1.8" stroke="#000" stroke-width="2" fill="none"/></svg></div>
<div class="t" style="left:890px;top:193.2px">Swan neck</div>
<div class="exp p" style="left:858px;top:213.4px"></div>
<div class="dh" style="left:868px;top:218px;width:6px"></div>
<div class="cb" style="left:875px;top:211.9px;width:12px;height:12px;border:1px solid #222"><svg width="10" height="10" style="position:absolute;left:0;top:0"><path d="M1.5 5 L4 8 L8.8 1.8" stroke="#000" stroke-width="2" fill="none"/></svg></div>
<div class="t" style="left:890px;top:210.4px">Transition</div>
<div class="exp p" style="left:837px;top:230.7px"></div>
<div class="dh" style="left:847px;top:235px;width:6px"></div>
<div class="cb" style="left:854px;top:229.2px;width:12px;height:12px;border:1px solid #222"></div>
<div class="t" style="left:870px;top:227.7px">Network end</div>
<div class="exp p" style="left:837px;top:247.9px"></div>
<div class="dh" style="left:847px;top:252px;width:6px"></div>
<div class="cb" style="left:854px;top:246.4px;width:12px;height:12px;border:1px solid #222"></div>
<div class="t" style="left:870px;top:244.9px">Network starting point</div>
<div class="exp m" style="left:837px;top:265.1px"></div>
<div class="dh" style="left:847px;top:270px;width:6px"></div>
<div class="cb" style="left:854px;top:263.6px;width:12px;height:12px;border:1px solid #222"><svg width="10" height="10" style="position:absolute;left:0;top:0"><path d="M1.5 5 L4 8 L8.8 1.8" stroke="#000" stroke-width="2" fill="none"/></svg></div>
<div class="t" style="left:870px;top:262.1px">Pipes and ducts</div>
<div class="cb" style="left:875px;top:280.9px;width:12px;height:12px;border:1px solid #222"><svg width="10" height="10" style="position:absolute;left:0;top:0"><path d="M1.5 5 L4 8 L8.8 1.8" stroke="#000" stroke-width="2" fill="none"/></svg></div>
<div class="t" style="left:890px;top:279.4px">Air duct - Rectangle</div>
<div class="cb" style="left:875px;top:298.1px;width:12px;height:12px;border:1px solid #222"></div>
<div class="t" style="left:890px;top:296.6px">Air duct - Round pipe</div>
<div class="exp p" style="left:837px;top:316.9px"></div>
<div class="dh" style="left:847px;top:321px;width:6px"></div>
<div class="cb" style="left:854px;top:315.4px;width:12px;height:12px;border:1px solid #222"></div>
<div class="t" style="left:870px;top:313.9px">Regulating device</div>
<div class="a" style="left:1333px;top:48px;width:79px;height:22px;background:#f0f0f0;border:1px solid #d9d9d9;border-bottom:none"></div>
<div class="t" style="left:1339px;top:51px">3D Geometry</div>
<div class="a" style="left:1500px;top:48px;width:58px;height:22px;background:#f0f0f0;border:1px solid #d9d9d9;border-bottom:none"></div>
<div class="t" style="left:1505px;top:51px">AutoCAD</div>
<div class="a" style="left:1558px;top:48px;width:52px;height:22px;background:#f0f0f0;border:1px solid #d9d9d9;border-bottom:none"></div>
<div class="t" style="left:1565px;top:51px">General</div>
<div class="a" style="left:1412px;top:45px;width:88px;height:25px;background:#fff;border:1px solid #d9d9d9;border-bottom:none"></div>
<div class="t" style="left:1420px;top:49px">AN Ventilation</div>
<div class="t" style="left:1807.5px;top:50px">only common</div>
<div class="cb" style="left:1880px;top:50px;width:14px;height:14px"></div>
<div class="a" style="left:1332px;top:69px;width:562px;height:348px;background:#fff;border:1px solid #828282"></div>
<div class="a" style="left:1333px;top:70px;width:541px;height:346px;overflow:hidden">
<div class="cb" style="left:2px;top:2.0px;width:14px;height:14px;border:1px solid #333"></div>
<div class="t" style="left:17px;top:1.5px;color:#000;font-size:11.8px">Material (section part)</div>
<div class="cb" style="left:2px;top:17.1px;width:14px;height:14px;border:1px solid #333"></div>
<div class="t" style="left:17px;top:16.6px;color:#000;font-size:11.8px">Material/dimension/insulation (section part)</div>
<div class="cb" style="left:2px;top:32.2px;width:14px;height:14px;border:1px solid #333"><svg width="12" height="12" style="position:absolute;left:0;top:0"><path d="M1.5 6 L4.5 9.5 L11 2" stroke="#222" stroke-width="1.2" fill="none"/></svg></div>
<div class="t" style="left:17px;top:31.7px;color:#000;font-size:11.8px">Name (Component)</div>
<div class="cb" style="left:2px;top:47.3px;width:14px;height:14px;border:1px solid #333"></div>
<div class="t" style="left:17px;top:46.8px;color:#000;font-size:11.8px">Name exterior insulation</div>
<div class="cb" style="left:2px;top:62.4px;width:14px;height:14px;border:1px solid #333"></div>
<div class="t" style="left:17px;top:61.9px;color:#000;font-size:11.8px">Name interior insulation</div>
<div class="cb" style="left:2px;top:77.4px;width:14px;height:14px;border:1px solid #333"></div>
<div class="t" style="left:17px;top:76.9px;color:#000;font-size:11.8px">Number (Component)</div>
<div class="cb" style="left:2px;top:92.5px;width:14px;height:14px;border:1px solid #333"></div>
<div class="t" style="left:17px;top:92.0px;color:#000;font-size:11.8px">Number (section part)</div>
<div class="cb" style="left:2px;top:107.6px;width:14px;height:14px;border:1px solid #333"></div>
<div class="t" style="left:17px;top:107.1px;color:#000;font-size:11.8px">Pipe type (section part)</div>
<div class="cb" style="left:2px;top:122.7px;width:14px;height:14px;border:1px solid #333"><svg width="12" height="12" style="position:absolute;left:0;top:0"><path d="M1.5 6 L4.5 9.5 L11 2" stroke="#222" stroke-width="1.2" fill="none"/></svg></div>
<div class="t" style="left:17px;top:122.2px;color:#000;font-size:11.8px">Pressure loss</div>
<div class="cb" style="left:2px;top:137.8px;width:14px;height:14px;border:1px solid #333"></div>
<div class="t" style="left:17px;top:137.3px;color:#000;font-size:11.8px">Pressure loss Balancing (section part)</div>
<div class="cb" style="left:2px;top:152.9px;width:14px;height:14px;border:1px solid #333"></div>
<div class="t" style="left:17px;top:152.4px;color:#000;font-size:11.8px">Pressure loss ducts and pipes (section part)</div>
<div class="cb" style="left:2px;top:168.0px;width:14px;height:14px;border:1px solid #333"></div>
<div class="t" style="left:17px;top:167.5px;color:#000;font-size:11.8px">Pressure loss Fittings (section part)</div>
<div class="cb" style="left:2px;top:183.1px;width:14px;height:14px;border:1px solid #333"></div>
<div class="t" style="left:17px;top:182.6px;color:#000;font-size:11.8px">R-value (section part)</div>
<div class="cb" style="left:2px;top:198.2px;width:14px;height:14px;border:1px solid #333"></div>
<div class="t" style="left:17px;top:197.7px;color:#000;font-size:11.8px">Sound level A weighted</div>
<div class="cb" style="left:2px;top:213.3px;width:14px;height:14px;border:1px solid #333"></div>
<div class="t" style="left:17px;top:212.8px;color:#000;font-size:11.8px">System name (section part, fan, combined supply and extract air unit, decentralized fan)</div>
<div class="cb" style="left:2px;top:228.4px;width:14px;height:14px;border:1px solid #333"></div>
<div class="t" style="left:17px;top:227.9px;color:#000;font-size:11.8px">System name (section part, fan, combined supply and extract air unit, decentralized fan)</div>
<div class="a" style="left:17px;top:243.4px;width:524px;height:15px;background:#0078d7"></div>
<div class="cb" style="left:2px;top:243.4px;width:14px;height:14px;border:1px solid #333"><svg width="12" height="12" style="position:absolute;left:0;top:0"><path d="M1.5 6 L4.5 9.5 L11 2" stroke="#222" stroke-width="1.2" fill="none"/></svg></div>
<div class="t" style="left:17px;top:242.9px;color:#fff;font-size:11.8px">Total pressure loss</div>
<div class="cb" style="left:2px;top:258.5px;width:14px;height:14px;border:1px solid #333"></div>
<div class="t" style="left:17px;top:258.0px;color:#000;font-size:11.8px">Volume flow rate (section part)</div>
<div class="cb" style="left:2px;top:273.6px;width:14px;height:14px;border:1px solid #333"></div>
<div class="t" style="left:17px;top:273.1px;color:#000;font-size:11.8px">Zeta value</div>
<div class="cb" style="left:2px;top:288.7px;width:14px;height:14px;border:1px solid #333"></div>
<div class="t" style="left:17px;top:288.2px;color:#000;font-size:11.8px">Zeta value (2. connection)</div>
<div class="cb" style="left:2px;top:303.8px;width:14px;height:14px;border:1px solid #333"></div>
<div class="t" style="left:17px;top:303.3px;color:#000;font-size:11.8px">Zeta value Branch (branch, manifold)</div>
<div class="cb" style="left:2px;top:318.9px;width:14px;height:14px;border:1px solid #333"></div>
<div class="t" style="left:17px;top:318.4px;color:#000;font-size:11.8px">Zeta value Branch 1 (double branch)</div>
<div class="cb" style="left:2px;top:334.0px;width:14px;height:14px;border:1px solid #333"></div>
<div class="t" style="left:17px;top:333.5px;color:#000;font-size:11.8px">Zeta value Branch 2 (double branch)</div>
</div>
<div class="a" style="left:1874px;top:70px;width:17px;height:346px;background:#f0f0f0"></div>
<div class="a" style="left:1875px;top:190px;width:16px;height:181px;background:#cdcdcd"></div>
<svg class="a" style="left:1877px;top:75px" width="12" height="10"><path d="M2 7 L6 3 L10 7" stroke="#505050" stroke-width="1.5" fill="none"/></svg>
<svg class="a" style="left:1877px;top:400px" width="12" height="10"><path d="M2 3 L6 7 L10 3" stroke="#505050" stroke-width="1.5" fill="none"/></svg>
<div class="a" style="left:826px;top:426px;width:1068px;height:430px;background:#fff;border:1px solid #a0a0a0;border-right-color:#e6e6e6"></div>
<div class="a" style="left:827px;top:427px;width:1066px;height:20px;background:#f0f0f0"></div>
<div class="a" style="left:827px;top:447px;width:34px;height:409px;background:#f0f0f0"></div>
<div class="a" style="left:827px;top:446.5px;width:1066px;height:1px;background:#a0a0a0"></div>
<div class="a" style="left:827px;top:465.9px;width:1048px;height:1px;background:#a0a0a0"></div>
<div class="a" style="left:827px;top:485.4px;width:1048px;height:1px;background:#a0a0a0"></div>
<div class="a" style="left:827px;top:504.8px;width:1048px;height:1px;background:#a0a0a0"></div>
<div class="a" style="left:827px;top:524.2px;width:1048px;height:1px;background:#a0a0a0"></div>
<div class="a" style="left:827px;top:543.6px;width:1048px;height:1px;background:#a0a0a0"></div>
<div class="a" style="left:827px;top:563.1px;width:1048px;height:1px;background:#a0a0a0"></div>
<div class="a" style="left:827px;top:582.5px;width:1048px;height:1px;background:#a0a0a0"></div>
<div class="a" style="left:827px;top:601.9px;width:1048px;height:1px;background:#a0a0a0"></div>
<div class="a" style="left:827px;top:621.4px;width:1048px;height:1px;background:#a0a0a0"></div>
<div class="a" style="left:827px;top:640.8px;width:1048px;height:1px;background:#a0a0a0"></div>
<div class="a" style="left:827px;top:660.2px;width:1048px;height:1px;background:#a0a0a0"></div>
<div class="a" style="left:827px;top:679.7px;width:1048px;height:1px;background:#a0a0a0"></div>
<div class="a" style="left:827px;top:699.1px;width:1048px;height:1px;background:#a0a0a0"></div>
<div class="a" style="left:827px;top:718.5px;width:1048px;height:1px;background:#a0a0a0"></div>
<div class="a" style="left:827px;top:738.0px;width:1048px;height:1px;background:#a0a0a0"></div>
<div class="a" style="left:827px;top:757.4px;width:1048px;height:1px;background:#a0a0a0"></div>
<div class="a" style="left:827px;top:776.8px;width:1048px;height:1px;background:#a0a0a0"></div>
<div class="a" style="left:827px;top:796.2px;width:1048px;height:1px;background:#a0a0a0"></div>
<div class="a" style="left:827px;top:815.7px;width:1048px;height:1px;background:#a0a0a0"></div>
<div class="a" style="left:827px;top:835.1px;width:1048px;height:1px;background:#a0a0a0"></div>
<div class="a" style="left:827px;top:854.5px;width:1048px;height:1px;background:#a0a0a0"></div>
<div class="a" style="left:861px;top:427px;width:1px;height:429px;background:#a0a0a0"></div>
<div class="a" style="left:1030px;top:427px;width:1px;height:429px;background:#a0a0a0"></div>
<div class="a" style="left:1199px;top:427px;width:1px;height:429px;background:#a0a0a0"></div>
<div class="a" style="left:1369px;top:427px;width:1px;height:429px;background:#a0a0a0"></div>
<div class="a" style="left:1538px;top:427px;width:1px;height:429px;background:#a0a0a0"></div>
<div class="a" style="left:1707px;top:427px;width:1px;height:429px;background:#a0a0a0"></div>
<div class="a" style="left:1875px;top:427px;width:1px;height:429px;background:#a0a0a0"></div>
<div class="cell" style="left:863px;top:428px"><span>Item number*</span></div>
<div class="cell" style="left:1032px;top:428px"><span>Name *</span></div>
<div class="cell" style="left:1201px;top:428px"><span>_3D_HEIGHT_AXIS_ABSOLUT</span></div>
<div class="cell r" style="left:1369px;width:168px;top:428px;text-align:right"><span>LIN_3D_LENGTH</span></div>
<div class="cell r" style="left:1538px;width:168px;top:428px;text-align:right"><span>Pressure loss</span></div>
<div class="cell r" style="left:1707px;width:167px;top:428px;text-align:right"><span>Total pressure loss</span></div>
<div class="cell r" style="left:827px;width:27px;top:448.0px;text-align:right"><span>1</span></div>
<div class="cell" style="left:863px;top:448.0px"><span>B060-100-500</span></div>
<div class="cell r" style="left:1199px;width:168px;top:448.0px;text-align:right"><span>2.60 m</span></div>
<div class="cell r" style="left:1369px;width:167px;top:448.0px;text-align:right"><span>1550 mm</span></div>
<div class="cell r" style="left:1707px;width:166px;top:448.0px;text-align:right"><span>24.00 Pa</span></div>
<div class="cell r" style="left:827px;width:27px;top:467.4px;text-align:right"><span>2</span></div>
<div class="cell" style="left:863px;top:467.4px"><span>B060-100-500</span></div>
<div class="cell r" style="left:1199px;width:168px;top:467.4px;text-align:right"><span>2.60 m</span></div>
<div class="cell r" style="left:1369px;width:167px;top:467.4px;text-align:right"><span>2550 mm</span></div>
<div class="cell r" style="left:1707px;width:166px;top:467.4px;text-align:right"><span>2.00 Pa</span></div>
<div class="cell r" style="left:827px;width:27px;top:486.9px;text-align:right"><span>3</span></div>
<div class="cell" style="left:863px;top:486.9px"><span>B060-100-500</span></div>
<div class="cell r" style="left:1199px;width:168px;top:486.9px;text-align:right"><span>2.60 m</span></div>
<div class="cell r" style="left:1369px;width:167px;top:486.9px;text-align:right"><span>1463 mm</span></div>
<div class="cell r" style="left:1707px;width:166px;top:486.9px;text-align:right"><span>1.00 Pa</span></div>
<div class="cell r" style="left:827px;width:27px;top:506.3px;text-align:right"><span>4</span></div>
<div class="cell" style="left:863px;top:506.3px"><span>B060-100-500</span></div>
<div class="cell r" style="left:1199px;width:168px;top:506.3px;text-align:right"><span>2.60 m</span></div>
<div class="cell r" style="left:1369px;width:167px;top:506.3px;text-align:right"><span>5409 mm</span></div>
<div class="cell r" style="left:1707px;width:166px;top:506.3px;text-align:right"><span>24.00 Pa</span></div>
<div class="cell r" style="left:827px;width:27px;top:525.7px;text-align:right"><span>5</span></div>
<div class="cell" style="left:863px;top:525.7px"><span>B060-100-500</span></div>
<div class="cell r" style="left:1199px;width:168px;top:525.7px;text-align:right"><span>1.34/1.24</span></div>
<div class="cell r" style="left:1369px;width:167px;top:525.7px;text-align:right"><span>100 mm</span></div>
<div class="cell r" style="left:1707px;width:166px;top:525.7px;text-align:right"><span>3.00 Pa</span></div>
<div class="cell r" style="left:827px;width:27px;top:545.1px;text-align:right"><span>6</span></div>
<div class="cell" style="left:863px;top:545.1px"><span>B060-100-500</span></div>
<div class="cell r" style="left:1199px;width:168px;top:545.1px;text-align:right"><span>2.35/1.34</span></div>
<div class="cell r" style="left:1369px;width:167px;top:545.1px;text-align:right"><span>1010 mm</span></div>
<div class="cell r" style="left:1707px;width:166px;top:545.1px;text-align:right"><span>3.00 Pa</span></div>
<div class="cell r" style="left:827px;width:27px;top:564.6px;text-align:right"><span>7</span></div>
<div class="cell" style="left:863px;top:564.6px"><span>B060-100-500</span></div>
<div class="cell r" style="left:1199px;width:168px;top:564.6px;text-align:right"><span>0.99 m</span></div>
<div class="cell r" style="left:1369px;width:167px;top:564.6px;text-align:right"><span>2259 mm</span></div>
<div class="cell r" style="left:1707px;width:166px;top:564.6px;text-align:right"><span>2.00 Pa</span></div>
<div class="cell r" style="left:827px;width:27px;top:584.0px;text-align:right"><span>8</span></div>
<div class="cell" style="left:863px;top:584.0px"><span>B060-100-500</span></div>
<div class="cell r" style="left:1199px;width:168px;top:584.0px;text-align:right"><span>2.60 m</span></div>
<div class="cell r" style="left:1369px;width:167px;top:584.0px;text-align:right"><span>3178 mm</span></div>
<div class="cell r" style="left:1707px;width:166px;top:584.0px;text-align:right"><span>24.00 Pa</span></div>
<div class="cell r" style="left:827px;width:27px;top:603.4px;text-align:right"><span>9</span></div>
<div class="cell" style="left:863px;top:603.4px"><span>B060-100-500</span></div>
<div class="cell r" style="left:1199px;width:168px;top:603.4px;text-align:right"><span>2.60 m</span></div>
<div class="cell r" style="left:1369px;width:167px;top:603.4px;text-align:right"><span>3114 mm</span></div>
<div class="cell r" style="left:1707px;width:166px;top:603.4px;text-align:right"><span>24.00 Pa</span></div>
<div class="cell r" style="left:827px;width:27px;top:622.9px;text-align:right"><span>10</span></div>
<div class="cell" style="left:863px;top:622.9px"><span>B060-100-500</span></div>
<div class="cell" style="left:1032px;top:622.9px"><span>Bogen, symmetrisch</span></div>
<div class="cell r" style="left:1199px;width:168px;top:622.9px;text-align:right"><span>2.60 m</span></div>
<div class="cell r" style="left:1538px;width:167px;top:622.9px;text-align:right"><span>6.00 Pa</span></div>
<div class="cell r" style="left:827px;width:27px;top:642.3px;text-align:right"><span>11</span></div>
<div class="cell" style="left:863px;top:642.3px"><span>B060-100-500</span></div>
<div class="cell" style="left:1032px;top:642.3px"><span>Bogen, symmetrisch</span></div>
<div class="cell r" style="left:1199px;width:168px;top:642.3px;text-align:right"><span>1.24/0.99</span></div>
<div class="cell r" style="left:1538px;width:167px;top:642.3px;text-align:right"><span>2.00 Pa</span></div>
<div class="cell r" style="left:827px;width:27px;top:661.7px;text-align:right"><span>12</span></div>
<div class="cell" style="left:863px;top:661.7px"><span>B060-100-500</span></div>
<div class="cell" style="left:1032px;top:661.7px"><span>Bogen, symmetrisch</span></div>
<div class="cell r" style="left:1199px;width:168px;top:661.7px;text-align:right"><span>2.60/2.35</span></div>
<div class="cell r" style="left:1538px;width:167px;top:661.7px;text-align:right"><span>2.00 Pa</span></div>
<div class="cell r" style="left:827px;width:27px;top:681.2px;text-align:right"><span>13</span></div>
<div class="cell" style="left:863px;top:681.2px"><span>B060-100-500</span></div>
<div class="cell" style="left:1032px;top:681.2px"><span>Bogen, symmetrisch</span></div>
<div class="cell r" style="left:1199px;width:168px;top:681.2px;text-align:right"><span>2.60 m</span></div>
<div class="cell r" style="left:1538px;width:167px;top:681.2px;text-align:right"><span>6.00 Pa</span></div>
<div class="cell r" style="left:827px;width:27px;top:700.6px;text-align:right"><span>14</span></div>
<div class="cell" style="left:863px;top:700.6px"><span>B060-100-500</span></div>
<div class="cell" style="left:1032px;top:700.6px"><span>Pipe transition asymmetric</span></div>
<div class="cell r" style="left:1199px;width:168px;top:700.6px;text-align:right"><span>2.60 m</span></div>
<div class="cell r" style="left:1369px;width:167px;top:700.6px;text-align:right"><span>350 mm</span></div>
<div class="cell r" style="left:1538px;width:167px;top:700.6px;text-align:right"><span>1.00 Pa</span></div>
<div class="cell r" style="left:827px;width:27px;top:720.0px;text-align:right"><span>15</span></div>
<div class="cell" style="left:863px;top:720.0px"><span>B060-100-500</span></div>
<div class="cell" style="left:1032px;top:720.0px"><span>Transition symmetric</span></div>
<div class="cell r" style="left:1199px;width:168px;top:720.0px;text-align:right"><span>0.99 m</span></div>
<div class="cell r" style="left:1369px;width:167px;top:720.0px;text-align:right"><span>900 mm</span></div>
<div class="cell r" style="left:1538px;width:167px;top:720.0px;text-align:right"><span>0.00 Pa</span></div>
<div class="cell r" style="left:827px;width:27px;top:739.5px;text-align:right"><span>16</span></div>
<div class="cell" style="left:863px;top:739.5px"><span>B080-501-1000</span></div>
<div class="cell r" style="left:1199px;width:168px;top:739.5px;text-align:right"><span>5.60/7.47</span></div>
<div class="cell r" style="left:1369px;width:167px;top:739.5px;text-align:right"><span>1871 mm</span></div>
<div class="cell r" style="left:1707px;width:166px;top:739.5px;text-align:right"><span>50.00 Pa</span></div>
<div class="cell r" style="left:827px;width:27px;top:758.9px;text-align:right"><span>17</span></div>
<div class="cell" style="left:863px;top:758.9px"><span>B080-501-1000</span></div>
<div class="cell r" style="left:1199px;width:168px;top:758.9px;text-align:right"><span>3.60/2.32</span></div>
<div class="cell r" style="left:1369px;width:167px;top:758.9px;text-align:right"><span>1282 mm</span></div>
<div class="cell r" style="left:1707px;width:166px;top:758.9px;text-align:right"><span>0.00 Pa</span></div>
<div class="cell r" style="left:827px;width:27px;top:778.3px;text-align:right"><span>18</span></div>
<div class="cell" style="left:863px;top:778.3px"><span>B080-501-1000</span></div>
<div class="cell r" style="left:1199px;width:168px;top:778.3px;text-align:right"><span>0.70 m</span></div>
<div class="cell r" style="left:1369px;width:167px;top:778.3px;text-align:right"><span>1992 mm</span></div>
<div class="cell r" style="left:1707px;width:166px;top:778.3px;text-align:right"><span>0.00 Pa</span></div>
<div class="cell r" style="left:827px;width:27px;top:797.7px;text-align:right"><span>19</span></div>
<div class="cell" style="left:863px;top:797.7px"><span>B080-501-1000</span></div>
<div class="cell r" style="left:1199px;width:168px;top:797.7px;text-align:right"><span>1.99 m</span></div>
<div class="cell r" style="left:1369px;width:167px;top:797.7px;text-align:right"><span>7720 mm</span></div>
<div class="cell r" style="left:1707px;width:166px;top:797.7px;text-align:right"><span>12.00 Pa</span></div>
<div class="cell r" style="left:827px;width:27px;top:817.2px;text-align:right"><span>20</span></div>
<div class="cell" style="left:863px;top:817.2px"><span>B080-501-1000</span></div>
<div class="cell r" style="left:1199px;width:168px;top:817.2px;text-align:right"><span>1.99 m</span></div>
<div class="cell r" style="left:1369px;width:167px;top:817.2px;text-align:right"><span>2236 mm</span></div>
<div class="cell r" style="left:1707px;width:166px;top:817.2px;text-align:right"><span>12.00 Pa</span></div>
<div class="cell r" style="left:827px;width:27px;top:836.6px;text-align:right"><span>21</span></div>
<div class="cell" style="left:863px;top:836.6px"><span>B080-501-1000</span></div>
<div class="cell r" style="left:1199px;width:168px;top:836.6px;text-align:right"><span>1.70 m</span></div>
<div class="cell r" style="left:1369px;width:167px;top:836.6px;text-align:right"><span>765 mm</span></div>
<div class="cell r" style="left:1707px;width:166px;top:836.6px;text-align:right"><span>0.00 Pa</span></div>
<div class="a" style="left:1876px;top:448px;width:17px;height:407px;background:#f0f0f0"></div>
<div class="a" style="left:1877px;top:466px;width:16px;height:370px;background:#cdcdcd"></div>
<svg class="a" style="left:1879px;top:452px" width="12" height="10"><path d="M2 7 L6 3 L10 7" stroke="#505050" stroke-width="1.5" fill="none"/></svg>
<svg class="a" style="left:1879px;top:841px" width="12" height="10"><path d="M2 3 L6 7 L10 3" stroke="#505050" stroke-width="1.5" fill="none"/></svg>
<div class="btn" style="top:70px">Refresh</div>
<div class="btn" style="top:128px">Save ...</div>
<div class="btn" style="top:159px">Load ...</div>
<div class="btn" style="top:267px">Create ...</div>
<div class="btn" style="top:365px">New ...</div>
<div class="btn" style="top:393px">Rename ...</div>
<div class="btn" style="top:446px">Search &lt;</div>
<div class="btn" style="top:606px">Create &lt;</div>
<div class="btn" style="top:637px">Update &lt;</div>
<div class="btn" style="top:668px">Get &lt;</div>
<div class="btn" style="top:749px">Export ...</div>
<div class="btn" style="top:780px">Import ...</div>
<div class="btn" style="top:835px">Close</div>
<div class="t" style="left:1902px;top:106px">Settings</div>
<div class="t" style="left:1902px;top:247px">Label</div>
<div class="t" style="left:1902px;top:342px">Parameter</div>
<div class="t" style="left:1902px;top:429px">Component</div>
<div class="t" style="left:1902px;top:583px">AutoCAD table</div>
<div class="t" style="left:1902px;top:727px">Excel</div>
<div class="cb" style="left:1903px;top:193px;width:14px;height:14px"><svg width="12" height="12" style="position:absolute;left:0;top:0"><path d="M1.5 6 L4.5 9.5 L11 2" stroke="#222" stroke-width="1.2" fill="none"/></svg></div>
<div class="t" style="left:1919px;top:193px">Show components</div>
<svg class="a" style="left:2015px;top:857px" width="14" height="14"><path d="M14 1 L1 14 M14 5.5 L5.5 14 M14 10 L10 14" stroke="#707070" stroke-width="1.2"/></svg>
<div class="a" style="left:1838px;top:973px;width:26px;height:27px;background:#e2e2e2"></div>
<div class="a" style="left:1868px;top:973px;width:26px;height:27px;background:#e2e2e2"></div>
<div class="a" style="left:1898px;top:973px;width:26px;height:27px;background:#e2e2e2"></div>
<svg class="a" style="left:1831px;top:965px" width="100" height="35" viewBox="1831 965 100 35">
<defs><radialGradient id="tg" cx="0.35" cy="0.3" r="0.8"><stop offset="0" stop-color="#e8fbfc"/><stop offset="0.6" stop-color="#8fd0d6"/><stop offset="1" stop-color="#4aa8b0"/></radialGradient></defs>
<circle cx="1851.2" cy="985.6" r="8.3" fill="url(#tg)" stroke="#111" stroke-width="1.6"/>
<rect x="1850.1" y="983" width="2.4" height="7.5" fill="#000"/><rect x="1850.1" y="979.6" width="2.4" height="2.2" fill="#000"/>
<circle cx="1881.5" cy="985.6" r="8.3" fill="url(#tg)" stroke="#111" stroke-width="1.6"/>
<path d="M1878.6 983.2 Q1878.8 979.8 1881.6 979.8 Q1884.6 979.9 1884.5 982.4 Q1884.4 984.2 1882.5 985 Q1881.6 985.5 1881.6 987.2" fill="none" stroke="#000" stroke-width="1.9"/><rect x="1880.6" y="988.6" width="2" height="2" fill="#000"/>
<path d="M1910.48,977.24 L1912.12,977.24 L1913.16,979.48 L1914.32,979.96 L1916.63,979.11 L1917.79,980.27 L1916.94,982.58 L1917.42,983.74 L1919.66,984.78 L1919.66,986.42 L1917.42,987.46 L1916.94,988.62 L1917.79,990.93 L1916.63,992.09 L1914.32,991.24 L1913.16,991.72 L1912.12,993.96 L1910.48,993.96 L1909.44,991.72 L1908.28,991.24 L1905.97,992.09 L1904.81,990.93 L1905.66,988.62 L1905.18,987.46 L1902.94,986.42 L1902.94,984.78 L1905.18,983.74 L1905.66,982.58 L1904.81,980.27 L1905.97,979.11 L1908.28,979.96 L1909.44,979.48 Z" fill="url(#tg)" stroke="#111" stroke-width="1.6" stroke-linejoin="round"/>
<circle cx="1911.3" cy="985.6" r="2.8" fill="#fff" stroke="#111" stroke-width="1.5"/>
</svg>
</body></html>
